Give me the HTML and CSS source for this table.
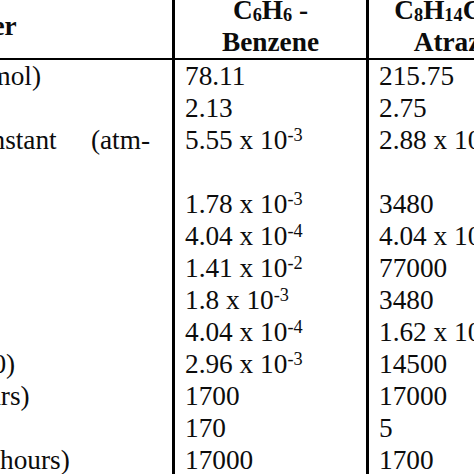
FILE: index.html
```html
<!DOCTYPE html>
<html>
<head>
<meta charset="utf-8">
<link rel="stylesheet" href="styles.css">
</head>
<body>
<table class="props">
  <colgroup>
    <col class="c-label">
    <col class="c-val">
    <col class="c-val">
  </colgroup>
  <thead>
    <tr>
      <th class="label">Parameter</th>
      <th class="val">C<sub>6</sub>H<sub>6</sub> -<br>Benzene</th>
      <th class="val">C<sub>8</sub>H<sub>14</sub>ClN<sub>5</sub> -<br>Atrazine</th>
    </tr>
  </thead>
  <tbody>
    <tr><td class="label">Molecular weight (g/mol)</td><td class="val">78.11</td><td class="val">215.75</td></tr>
    <tr><td class="label">Log K<sub>ow</sub></td><td class="val">2.13</td><td class="val">2.75</td></tr>
    <tr><td class="label">Henry's Law Constant (atm-m<sup>3</sup>/mole)</td><td class="val">5.55 x 10<sup>-3</sup></td><td class="val">2.88 x 10<sup>-9</sup></td></tr>
    <tr><td class="label">K<sub>p</sub> soil (L/kg)</td><td class="val">1.78 x 10<sup>-3</sup></td><td class="val">3480</td></tr>
    <tr><td class="label">K<sub>p</sub> water (L/kg)</td><td class="val">4.04 x 10<sup>-4</sup></td><td class="val">4.04 x 10<sup>-4</sup></td></tr>
    <tr><td class="label">K<sub>p</sub> air (L/kg)</td><td class="val">1.41 x 10<sup>-2</sup></td><td class="val">77000</td></tr>
    <tr><td class="label">K<sub>p</sub> sediment (L/kg)</td><td class="val">1.8 x 10<sup>-3</sup></td><td class="val">3480</td></tr>
    <tr><td class="label">K<sub>p</sub> biota (L/kg)</td><td class="val">4.04 x 10<sup>-4</sup></td><td class="val">1.62 x 10<sup>-4</sup></td></tr>
    <tr><td class="label">Vapor pressure (Pa, 20)</td><td class="val">2.96 x 10<sup>-3</sup></td><td class="val">14500</td></tr>
    <tr><td class="label">Half-life in lakes (hours)</td><td class="val">1700</td><td class="val">17000</td></tr>
    <tr><td class="label">Half-life in air (h)</td><td class="val">170</td><td class="val">5</td></tr>
    <tr><td class="label">Half life in sediment (hours)</td><td class="val">17000</td><td class="val">1700</td></tr>
  </tbody>
</table>
</body>
</html>
```
FILE: styles.css
```css
html, body {
  margin: 0;
  padding: 0;
  background: #ffffff;
  overflow: hidden;
}

body {
  width: 474px;
  height: 474px;
  overflow: hidden;
}

.props {
  font-family: "Liberation Serif", "Times New Roman", serif;
  font-size: 27.3px;
  line-height: 32px;
  color: #0c0c0c;
  border-collapse: separate;
  border-spacing: 0;
  table-layout: fixed;
  width: 801px;
  margin-left: -241px;
  margin-top: -6px;
}

.c-label { width: 413px; }
.c-val { width: 194px; }

.props th,
.props td {
  padding: 0 10px;
  vertical-align: top;
}

.props th {
  font-weight: bold;
  text-align: center;
  vertical-align: middle;
  border-bottom: 2px solid #000;
}

.props .label {
  padding-left: 0;
  padding-right: 22px;
}

.props td.label {
  text-align: justify;
}

.props .val {
  border-left: 3px solid #000;
}

.props td.val {
  text-align: left;
}

sup {
  font-size: 0.67em;
  line-height: 0;
  vertical-align: 0.46em;
}

sub {
  font-size: 0.67em;
  line-height: 0;
  vertical-align: -0.1em;
}
```
